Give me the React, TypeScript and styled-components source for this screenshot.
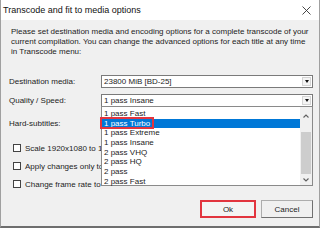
import React from 'react';
import styled, { createGlobalStyle } from 'styled-components';

const GlobalStyle = createGlobalStyle`
  html, body {
    margin: 0;
    padding: 0;
    background: #f0f0f0;
  }
  body {
    font-family: "Liberation Sans", Arial, sans-serif;
  }
`;

const Window = styled.div`
  width: 320px;
  height: 228px;
  box-sizing: border-box;
  background: #f0f0f0;
  border-left: 1px solid #a0a0a0;
  border-right: 1px solid #a0a0a0;
  border-bottom: 2px solid #6e6e6e;
  display: flex;
  flex-direction: column;
  color: #1c1c1c;
  font-size: 8px;
  overflow: hidden;
`;

const TitleBar = styled.div`
  height: 20px;
  flex: none;
  background: #ffffff;
  display: flex;
  align-items: center;
  justify-content: space-between;
  padding: 0 8px 0 2px;
`;

const Title = styled.span`
  font-size: 9px;
  color: #111;
`;

const Body = styled.div`
  flex: 1;
  display: flex;
  flex-direction: column;
  padding: 7px 6px 0 8px;
`;

const Intro = styled.p`
  margin: 0 0 0 2px;
  line-height: 10px;
`;

const FormRow = styled.div<{ top: number }>`
  display: flex;
  align-items: center;
  height: 13px;
  margin-top: ${p => p.top}px;
`;

const Label = styled.span`
  width: 92px;
  flex: none;
`;

const Select = styled.div`
  position: relative;
  flex: 1;
  height: 13px;
  box-sizing: border-box;
  background: #fff;
  border: 1px solid #7a7a7a;
  display: flex;
  align-items: center;
  padding-left: 2px;
`;

const SelectValue = styled.span`
  flex: 1;
`;

const ArrowBox = styled.span`
  width: 9px;
  height: 9px;
  margin-right: 1px;
  box-sizing: border-box;
  border: 1px solid #d4d4d4;
  background: #f4f4f4;
  display: flex;
  align-items: center;
  justify-content: center;
`;

const Caret = styled.span`
  width: 0;
  height: 0;
  border-left: 2.5px solid transparent;
  border-right: 2.5px solid transparent;
  border-top: 3px solid #111;
`;

const DropList = styled.div`
  position: absolute;
  top: 100%;
  left: -1px;
  right: -1px;
  height: 80px;
  box-sizing: border-box;
  background: #fff;
  border: 1px solid #8a8a8a;
  padding-top: 2px;
  z-index: 5;
`;

const Option = styled.div<{ selected?: boolean }>`
  position: relative;
  height: 9.7px;
  line-height: 9.7px;
  margin-right: 12px;
  padding-left: 2px;
  white-space: nowrap;
  background: ${p => (p.selected ? '#0078d7' : 'transparent')};
  color: ${p => (p.selected ? '#fff' : '#1c1c1c')};
`;

const Highlight = styled.span`
  position: absolute;
  left: -2px;
  top: -2px;
  width: 54px;
  height: 12px;
  box-sizing: border-box;
  border: 2px solid #e2353f;
`;

const ScrollBar = styled.div`
  position: absolute;
  top: 0;
  right: 0;
  bottom: 0;
  width: 12px;
  background: #f0f0f0;
  display: flex;
  flex-direction: column;
  align-items: center;
`;

const ScrollButton = styled.div<{ h: number }>`
  height: ${p => p.h}px;
  width: 100%;
  display: flex;
  align-items: center;
  justify-content: center;
`;

const ScrollTrack = styled.div`
  flex: 1;
  width: 100%;
  display: flex;
  flex-direction: column;
  padding-top: 8px;
  box-sizing: border-box;
`;

const Thumb = styled.div`
  height: 42px;
  margin: 0 1px;
  background: #cdcdcd;
`;

/* rows run under the open list, so they are cut where the list starts */
const CheckRow = styled.label<{ top?: number }>`
  display: flex;
  align-items: center;
  width: 92px;
  height: 18px;
  margin-top: ${p => p.top ?? 0}px;
  padding-left: 4px;
  box-sizing: border-box;
  white-space: nowrap;
  overflow: hidden;
`;

const CheckBox = styled.span`
  width: 8px;
  height: 8px;
  box-sizing: border-box;
  border: 1px solid #444;
  background: #fff;
  margin-right: 4px;
  flex: none;
`;

const Footer = styled.div`
  margin-top: auto;
  display: flex;
  justify-content: flex-end;
  gap: 5px;
  padding: 0 6px 8px 0;
`;

const Button = styled.button<{ marked?: boolean; w: number }>`
  width: ${p => p.w}px;
  height: 18px;
  box-sizing: border-box;
  font: inherit;
  font-size: 8px;
  color: #1c1c1c;
  padding: 0;
  background: ${p => (p.marked ? '#f4f4f4' : '#f0f0f0')};
  border: ${p => (p.marked ? '2px solid #e2353f' : '1px solid #adadad')};
  border-right-color: ${p => (p.marked ? '#e2353f' : '#707070')};
  border-bottom-color: ${p => (p.marked ? '#e2353f' : '#707070')};
`;

const Chevron = ({ up }: { up?: boolean }) => (
  <svg width="6" height="4" viewBox="0 0 6 4">
    <path
      d={up ? 'M0.5 3.5 L3 1 L5.5 3.5' : 'M0.5 0.5 L3 3 L5.5 0.5'}
      fill="none"
      stroke="#606060"
      strokeWidth="1.1"
    />
  </svg>
);

const CloseIcon = () => (
  <svg width="9" height="9" viewBox="0 0 9 9">
    <path d="M0.5 0.5 L8.5 8.5 M8.5 0.5 L0.5 8.5" stroke="#333" strokeWidth="0.9" />
  </svg>
);

const qualityOptions = [
  '1 pass Fast',
  '1 pass Turbo',
  '1 pass Extreme',
  '1 pass Insane',
  '2 pass VHQ',
  '2 pass HQ',
  '2 pass',
  '2 pass Fast',
];

const App: React.FC = () => {
  return (
    <>
      <GlobalStyle />
      <Window>
        <TitleBar>
          <Title>Transcode and fit to media options</Title>
          <CloseIcon />
        </TitleBar>
        <Body>
          <Intro>
            Please set destination media and encoding options for a complete transcode of your
            <br />
            current compilation. You can change the advanced options for each title at any time
            <br />
            in Transcode menu:
          </Intro>

          <FormRow top={18}>
            <Label>Destination media:</Label>
            <Select>
              <SelectValue>23800 MiB [BD-25]</SelectValue>
              <ArrowBox><Caret /></ArrowBox>
            </Select>
          </FormRow>

          <FormRow top={6}>
            <Label>Quality / Speed:</Label>
            <Select>
              <SelectValue>1 pass Insane</SelectValue>
              <ArrowBox><Caret /></ArrowBox>
              <DropList>
                {qualityOptions.map((opt, i) => (
                  <Option key={opt} selected={i === 1}>
                    {opt}
                    {i === 1 && <Highlight />}
                  </Option>
                ))}
                <ScrollBar>
                  <ScrollButton h={17}><Chevron up /></ScrollButton>
                  <ScrollTrack><Thumb /></ScrollTrack>
                  <ScrollButton h={11}><Chevron /></ScrollButton>
                </ScrollBar>
              </DropList>
            </Select>
          </FormRow>

          <FormRow top={10}>
            <Label>Hard-subtitles:</Label>
            <Select>
              <SelectValue />
              <ArrowBox><Caret /></ArrowBox>
            </Select>
          </FormRow>

          <CheckRow top={9}>
            <CheckBox />
            Scale 1920x1080 to 1280x720
          </CheckRow>
          <CheckRow>
            <CheckBox />
            Apply changes only to titles
          </CheckRow>
          <CheckRow>
            <CheckBox />
            Change frame rate to 25 fps
          </CheckRow>
        </Body>
        <Footer>
          <Button w={56} marked>Ok</Button>
          <Button w={52}>Cancel</Button>
        </Footer>
      </Window>
    </>
  );
};

export default App;
